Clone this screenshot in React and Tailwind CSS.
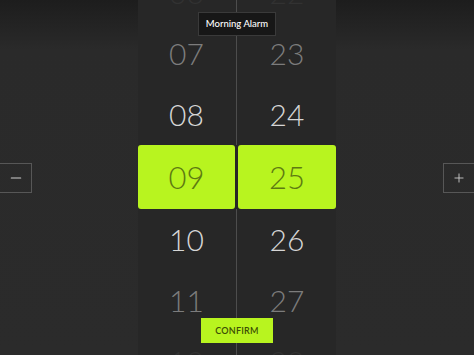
import { Minus, Plus } from 'lucide-react'

const hours = ['06', '07', '08', '09', '10', '11', '12']
const minutes = ['22', '23', '24', '25', '26', '27', '28']
const tones = ['text-[#323232]', 'text-[#7c7c7c]', 'text-[#d6d6d6]', '', 'text-[#d6d6d6]', 'text-[#7c7c7c]', 'text-[#323232]']

function Row({ h, m, tone, selected }) {
  if (selected) {
    return (
      <div className="flex h-[64px] shrink-0">
        <div className="w-[97px] rounded-[3px] bg-[#b8f41f] flex items-center justify-center text-[31px] font-light text-[#5e7a12]">{h}</div>
        <div className="w-[3px] bg-[#262626]" />
        <div className="w-[98px] rounded-[3px] bg-[#b8f41f] flex items-center justify-center text-[31px] font-light text-[#5e7a12]">{m}</div>
      </div>
    )
  }
  return (
    <div className={`flex h-[61px] shrink-0 text-[30px] font-light ${tone}`}>
      <div className="w-[97px] flex items-center justify-center">{h}</div>
      <div className="w-[3px] flex justify-center">
        <div className="w-px bg-[#4d4d4d]" />
      </div>
      <div className="w-[98px] flex items-center justify-center">{m}</div>
    </div>
  )
}

export default function App() {
  return (
    <div
      className="relative w-[474px] h-[355px] overflow-hidden bg-gradient-to-b from-[#1d1d1d] via-[#2a2a2a] via-[14%] to-[#2b2b2b] flex items-start"
      style={{ fontFamily: 'Lato, "Noto Sans", sans-serif' }}
    >
      {/* Minus */}
      <div className="flex-1 flex items-start pt-[163px]">
        <button className="w-[33px] h-[30px] -ml-px border border-[#575757] flex items-center justify-center text-[#d0d0d0]">
          <Minus className="w-[16px] h-[16px]" strokeWidth={1.75} />
        </button>
      </div>

      {/* Picker */}
      <div className="w-[198px] bg-[#272727] flex flex-col -mt-[38px]">
        {hours.map((h, i) => (
          <Row key={h} h={h} m={minutes[i]} tone={tones[i]} selected={i === 3} />
        ))}
      </div>

      {/* Plus */}
      <div className="flex-1 flex items-start justify-end pt-[163px]">
        <button className="w-[32px] h-[30px] -mr-px border border-[#575757] flex items-center justify-center text-[#d0d0d0]">
          <Plus className="w-[14px] h-[14px]" strokeWidth={1.5} />
        </button>
      </div>

      {/* Title */}
      <div className="absolute top-[12px] left-[198px] w-[78px] h-[24px] bg-[#171717] border border-[#3a3a3a] flex items-center justify-center text-[9.5px] text-white font-medium">
        Morning Alarm
      </div>

      {/* Confirm */}
      <button className="absolute top-[318px] left-[201px] w-[72px] h-[25px] bg-[#b8f41f] flex items-center justify-center text-[9px] font-semibold tracking-wide text-[#3c4f05]">
        CONFIRM
      </button>
    </div>
  )
}
